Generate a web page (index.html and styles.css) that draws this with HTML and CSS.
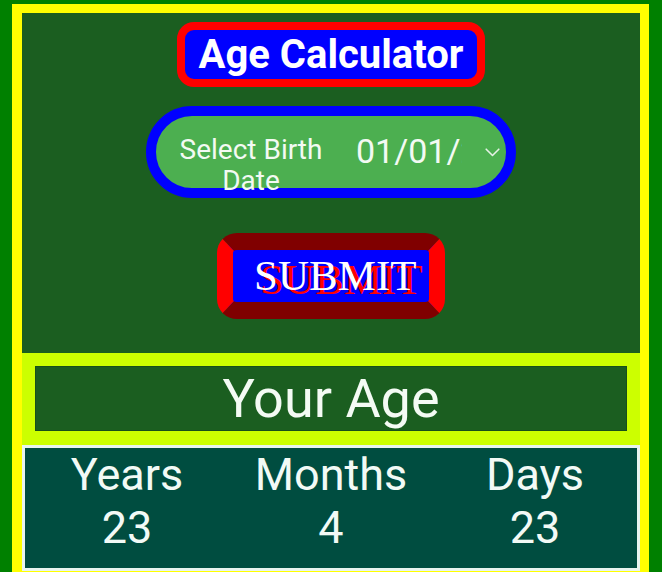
FILE: index.html
```html
<!DOCTYPE html>
<html lang="en">
<head>
<meta charset="utf-8">
<title>Age Calculator</title>
<link rel="stylesheet" href="styles.css">
</head>
<body>
<div class="app">
  <section class="form-panel">
    <h1 class="title">Age Calculator</h1>
    <div class="date-box">
      <label class="date-label" for="dob">Select Birth Date</label>
      <div class="date-value" id="dob">01/01/2000</div>
      <svg class="chevron" width="15" height="9" viewBox="0 0 15 9" aria-hidden="true">
        <path d="M1.2 1.2 L7.5 7.5 L13.8 1.2" fill="none" stroke="#e6f2e6" stroke-width="1.6" stroke-linecap="round" stroke-linejoin="round"/>
      </svg>
    </div>
    <button class="submit" type="button">SUBMIT</button>
  </section>
  <section class="result-head">
    <div class="your-age">Your Age</div>
  </section>
  <section class="result">
    <div class="col"><div>Years</div><div>23</div></div>
    <div class="col"><div>Months</div><div>4</div></div>
    <div class="col"><div>Days</div><div>23</div></div>
  </section>
</div>
</body>
</html>
```

FILE: styles.css
```css
html, body {
  margin: 0;
}
body {
  background: #008000;
  padding: 4px 13px 0 12px;
  font-family: Roboto, "Liberation Sans", sans-serif;
}
.app {
  border: 9px solid #ffff00;
  border-left-width: 10px;
  background: #1b5e20;
}
.form-panel {
  background: #1b5e20;
  display: flex;
  flex-direction: column;
  align-items: center;
  padding: 9px 0 34px;
}
.title {
  margin: 0;
  font-family: Roboto, sans-serif;
  font-weight: 700;
  font-size: 40px;
  line-height: 49px;
  color: #ffffff;
  background: #0000ff;
  border: 8px solid #ff0000;
  border-radius: 17px;
  padding: 0 14px;
}
.date-box {
  margin-top: 19px;
  box-sizing: border-box;
  width: 370px;
  height: 92px;
  border: 10px solid #0000ff;
  border-radius: 46px;
  background: #4caf50;
  display: flex;
  align-items: flex-start;
  color: #f3faf3;
}
.date-label {
  margin: 18px 0 0 14px;
  width: 162px;
  text-align: center;
  font-size: 28px;
  line-height: 31px;
}
.date-value {
  margin: 15px 0 0 24px;
  width: 106px;
  overflow: hidden;
  white-space: nowrap;
  font-size: 34px;
  line-height: 40px;
}
.chevron {
  margin: 32px 0 0 23px;
  display: block;
}
.submit {
  margin-top: 35px;
  box-sizing: border-box;
  width: 228px;
  height: 86px;
  border-style: solid;
  border-width: 17px 16px;
  border-color: #800000 #ff0000 #800000 #ff0000;
  border-radius: 20px;
  background: #0000ff;
  color: #ffffff;
  font-family: "Liberation Serif", "Times New Roman", serif;
  font-size: 43px;
  line-height: 52px;
  text-align: left;
  padding: 0 0 0 21px;
  text-shadow: 6px 4px #ff0000;
}
.result-head {
  background: #ccff00;
  padding: 13px 13px 14px;
}
.your-age {
  background: #1b5e20;
  border: 1px solid #174f1a;
  text-align: center;
  color: #f4fbf4;
  font-size: 54px;
  line-height: 63px;
}
.result {
  background: #004d40;
  border: 3px solid #e8f4ef;
  display: grid;
  grid-template-columns: 1fr 1fr 1fr;
  padding: 0 0 14px;
  color: #f2faf6;
  font-size: 45px;
  line-height: 53px;
  text-align: center;
}
```
